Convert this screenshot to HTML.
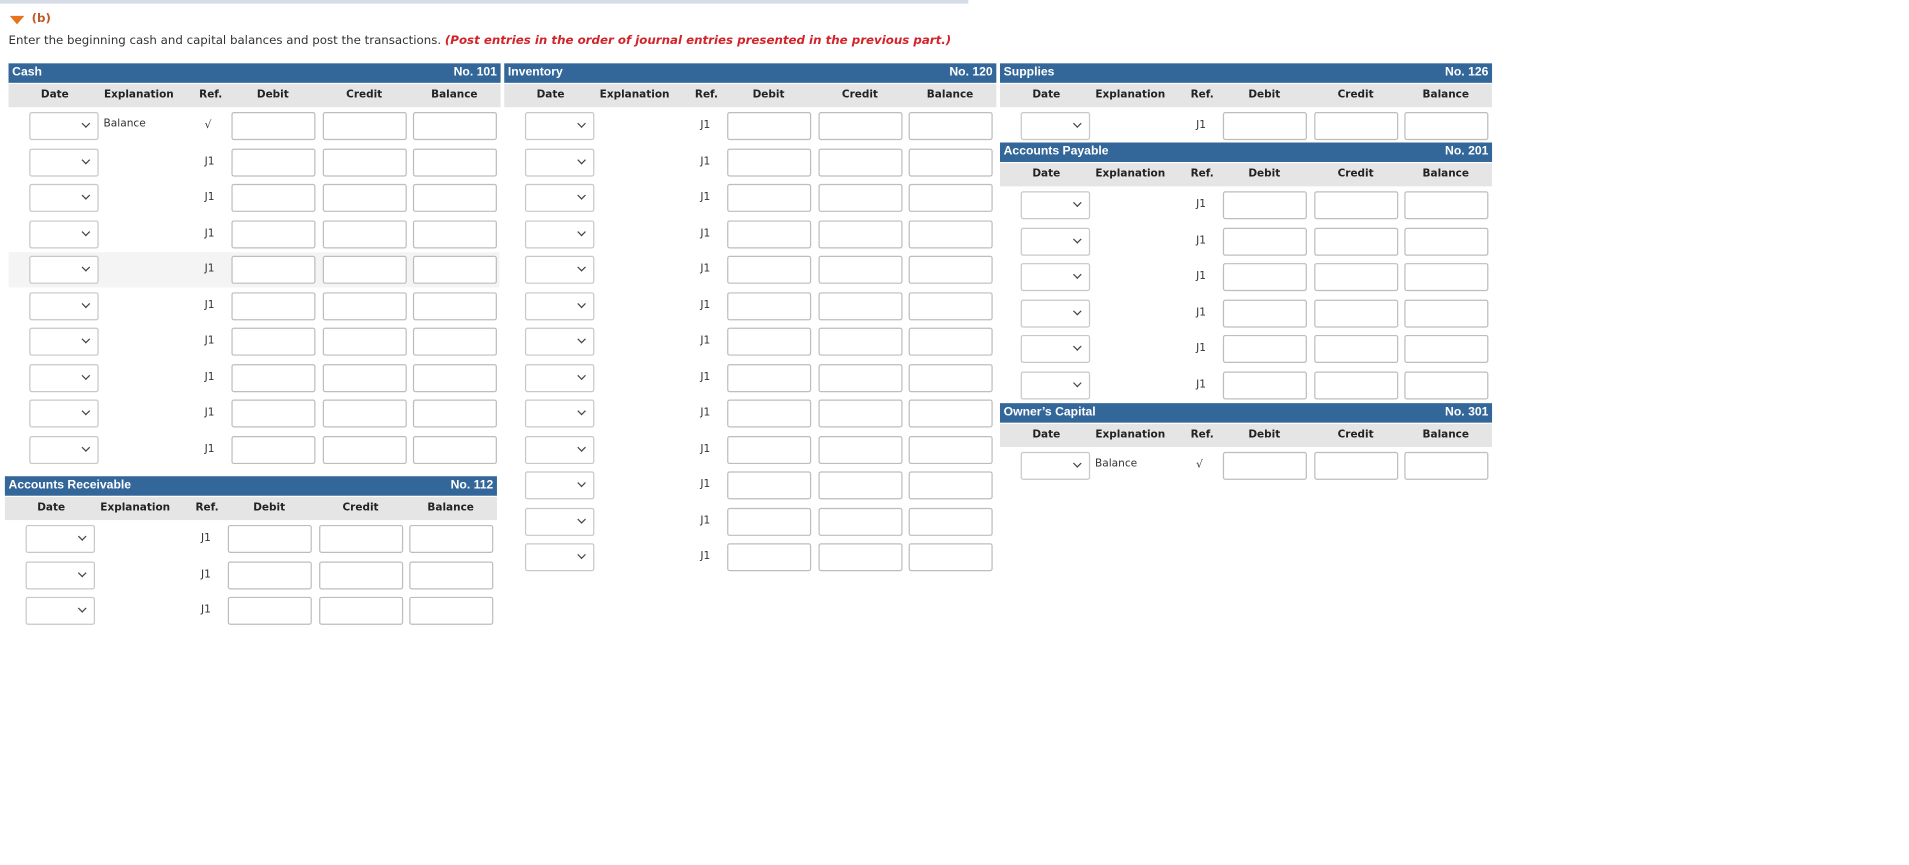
<!DOCTYPE html>
<html><head><meta charset="utf-8"><style>
body{margin:0;width:1909px;height:864px;background:#fff;font-family:Verdana,"DejaVu Sans",sans-serif;position:relative;overflow:hidden}
#w{position:absolute;left:0;top:0;width:1568px;height:710px;transform:scale(1.218);transform-origin:0 0}
.a{position:absolute}
.hb{position:absolute;height:16px;background:#336699;color:#fff;font:bold 10px "Liberation Sans",sans-serif;line-height:16px}
.ch{position:absolute;height:19px;background:#e5e5e5;font:bold 8.6px "DejaVu Sans",sans-serif;line-height:19px;color:#222}
.ch span{position:absolute;transform:translateX(-50%)}
.sel{position:absolute;width:55px;height:21px;border:1px solid #c8c8c8;border-radius:2px;background:#fff}
.sel:after{content:"";position:absolute;right:7px;top:6px;width:4px;height:4px;border-right:1.5px solid #444;border-bottom:1.5px solid #444;transform:rotate(45deg)}
.in{position:absolute;width:67px;height:21px;border:1px solid #bdbdbd;border-radius:2px;background:#fff}
.t{position:absolute;font:8.7px "DejaVu Sans",sans-serif;color:#333}
</style></head><body><div id="w">
<div class="a" style="left:0;top:0;width:795px;height:3px;background:#d6dde6"></div>
<div class="a" style="left:8px;top:13px;width:0;height:0;border-left:6px solid transparent;border-right:6px solid transparent;border-top:7px solid #e8731e"></div>
<div class="a" style="left:26px;top:10px;font:bold 9.7px 'DejaVu Sans',sans-serif;color:#c0582a">(b)</div>
<div class="a" style="left:7px;top:28px;font:9.7px 'DejaVu Sans',sans-serif;color:#333;white-space:nowrap">Enter the beginning cash and capital balances and post the transactions. <b style="color:#d2232a;font-style:italic">(Post entries in the order of journal entries presented in the previous part.)</b></div>
<div class="a" style="left:7px;top:207px;width:403px;height:29px;background:#f4f4f4"></div>
<div id="root"></div>
</div>
<script>
var R=document.getElementById('root');
function el(c,css,txt){var d=document.createElement('div');d.className=c;d.style.cssText=css;if(txt)d.textContent=txt;R.appendChild(d);return d;}
function tbl(x,y,title,no,rows){
 el('hb','left:'+x+'px;top:'+y+'px;width:404px;','').innerHTML='<span style="position:absolute;left:3px">'+title+'</span><span style="position:absolute;right:3px">'+no+'</span>';
 var c=el('ch','left:'+x+'px;top:'+(y+17)+'px;width:404px','');
 var cols=[[38,'Date'],[107,'Explanation'],[166,'Ref.'],[217,'Debit'],[292,'Credit'],[366,'Balance']];
 cols.forEach(function(k){var s=document.createElement('span');s.style.left=k[0]+'px';s.textContent=k[1];c.appendChild(s);});
 rows.forEach(function(r,i){var cy=y+51+i*29.5;var top=Math.round(cy-11);
  el('sel','left:'+(x+17)+'px;top:'+top+'px');
  if(r[1])el('t','left:'+(x+78)+'px;top:'+(top+5)+'px',r[1]);
  el('t','left:'+(x+161)+'px;top:'+(top+6)+'px',r[0]);
  [183,258,332].forEach(function(o){el('in','left:'+(x+o)+'px;top:'+top+'px');});
 });
}
function J(n){var a=[];for(var i=0;i<n;i++)a.push(['J1','']);return a;}
tbl(7,52,'Cash','No. 101',[['\u221A','Balance']].concat(J(9)));
tbl(414,52,'Inventory','No. 120',J(13));
tbl(821,52,'Supplies','No. 126',J(1));
tbl(821,117,'Accounts Payable','No. 201',J(6));
tbl(821,331,'Owner\u2019s Capital','No. 301',[['\u221A','Balance']]);
tbl(4,391,'Accounts Receivable','No. 112',J(3));
</script>
</body></html>
